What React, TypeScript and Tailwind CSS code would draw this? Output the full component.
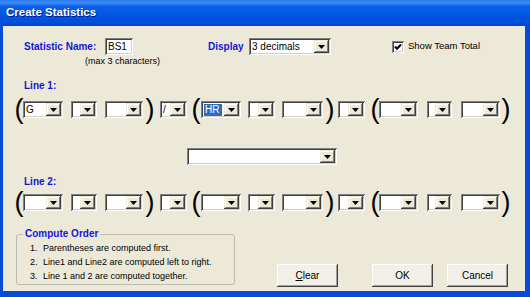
import React from "react";

const font = { fontFamily: '"Liberation Sans", Arial, sans-serif' };

function Arrow() {
  return (
    <svg width="7" height="4" viewBox="0 0 7 4">
      <polygon points="0,0 7,0 3.5,4" fill="#000" />
    </svg>
  );
}

function Combo({
  w,
  cls = "",
  v,
  sel,
}: {
  w: string;
  cls?: string;
  v?: string;
  sel?: boolean;
}) {
  return (
    <div
      className={`${w} ${cls} h-[17px] shrink-0 flex bg-white shadow-[inset_1px_1px_#808080,inset_-1px_-1px_#ffffff,inset_2px_2px_#404040,inset_-2px_-2px_#d4d0c8]`}
    >
      <div className="flex-1 min-w-0 flex items-center pl-[3px] text-[10px] leading-none">
        {v &&
          (sel ? (
            <span className="h-[12px] flex items-center bg-[#316AC5] text-white pl-[1px] pr-[3px]">
              {v}
            </span>
          ) : (
            <span>{v}</span>
          ))}
      </div>
      <div className="w-[15px] h-[13px] my-[2px] mr-[2px] flex items-center justify-center bg-[#ECE9D8] shadow-[inset_-1px_-1px_#404040,inset_1px_1px_#ECE9D8,inset_-2px_-2px_#808080,inset_2px_2px_#ffffff]">
        <Arrow />
      </div>
    </div>
  );
}

function P({ c, ml = "" }: { c: string; ml?: string }) {
  return (
    <div
      className={`${ml} w-[8px] h-[25px] shrink-0 flex items-center justify-center text-[27px] leading-none`}
    >
      {c}
    </div>
  );
}

function EqRow({ first }: { first?: boolean }) {
  return (
    <div className="flex items-center h-[25px] ml-[12px]">
      <P c="(" />
      <Combo w="w-[40px]" v={first ? "G" : undefined} />
      <Combo w="w-[26px]" cls="ml-[8px]" />
      <Combo w="w-[38px]" cls="ml-[8px]" />
      <P c=")" ml="ml-[3px]" />
      <Combo w="w-[27px]" cls="ml-[6px]" v={first ? "/" : undefined} />
      <P c="(" ml="ml-[5px]" />
      <Combo w="w-[40px]" cls="ml-[1px]" v={first ? "HR" : undefined} sel={first} />
      <Combo w="w-[27px]" cls="ml-[7px]" />
      <Combo w="w-[41px]" cls="ml-[7px]" />
      <P c=")" ml="ml-[3px]" />
      <Combo w="w-[27px]" cls="ml-[4px]" />
      <P c="(" ml="ml-[6px]" />
      <Combo w="w-[39px]" />
      <Combo w="w-[25px]" cls="ml-[9px]" />
      <Combo w="w-[39px]" cls="ml-[9px]" />
      <P c=")" ml="ml-[2px]" />
    </div>
  );
}

function Btn({ children, cls = "" }: { children: React.ReactNode; cls?: string }) {
  return (
    <div
      className={`${cls} w-[61px] h-[23px] flex items-center justify-center text-[10px] bg-[#F2F0E6] shadow-[inset_-1px_-1px_#404040,inset_1px_1px_#ffffff,inset_-2px_-2px_#a0a0a0]`}
    >
      {children}
    </div>
  );
}

export default function App() {
  return (
    <div
      className="w-[530px] h-[297px] flex flex-col bg-[#0A4BD6] text-black"
      style={font}
    >
      {/* Title bar */}
      <div className="h-[26px] shrink-0 flex items-center pl-[6px] bg-[linear-gradient(to_bottom,#2A7BF0_0%,#3C8DF8_10%,#0D60E6_25%,#0055E3_60%,#0050DA_85%,#0044C6_100%)]">
        <span className="text-white font-bold text-[11.5px] [text-shadow:1px_1px_#0A1883]">
          Create Statistics
        </span>
      </div>

      {/* Body */}
      <div className="flex-1 ml-[3px] mr-[5px] mb-[6px] bg-[#ECE9D8] flex flex-col">
        {/* Name / display / team total */}
        <div className="mt-[12px] ml-[21px] flex flex-col">
          <div className="flex items-center h-[17px]">
            <div className="w-[81px] text-[10px] font-bold text-[#1515D8]">Statistic Name:</div>
            <div className="w-[28px] h-[17px] flex items-center pl-[3px] text-[10px] bg-white shadow-[inset_1px_1px_#808080,inset_-1px_-1px_#ffffff,inset_2px_2px_#404040,inset_-2px_-2px_#d4d0c8]">
              BS1
            </div>
            <div className="ml-[75px] w-[41px] text-[10px] font-bold text-[#1515D8]">Display</div>
            <Combo w="w-[82px]" v="3 decimals" />
            <div className="ml-[61px] w-[12px] h-[12px] flex items-center justify-center bg-white shadow-[inset_1px_1px_#808080,inset_-1px_-1px_#ffffff,inset_2px_2px_#404040,inset_-2px_-2px_#d4d0c8]">
              <svg width="8" height="8" viewBox="0 0 8 8">
                <path d="M1 3.5 L3 5.8 L7 1.5" stroke="#000" strokeWidth="2" fill="none" />
              </svg>
            </div>
            <div className="ml-[4px] text-[9.5px]">Show Team Total</div>
          </div>
          <div className="ml-[61px] text-[9px] leading-[12px]">(max 3 characters)</div>
        </div>

        {/* Line 1 */}
        <div className="mt-[13px] ml-[21px] text-[10px] leading-[12px] font-bold text-[#1515D8]">
          Line 1:
        </div>
        <div className="mt-[5px]">
          <EqRow first />
        </div>

        {/* Operator */}
        <div className="mt-[26px] ml-[184px]">
          <Combo w="w-[150px]" />
        </div>

        {/* Line 2 */}
        <div className="mt-[11px] ml-[21px] text-[10px] leading-[12px] font-bold text-[#1515D8]">
          Line 2:
        </div>
        <div className="mt-[2px]">
          <EqRow />
        </div>

        {/* Compute order + buttons */}
        <div className="mt-[13px] flex items-end">
          <fieldset className="ml-[13px] w-[219px] mb-[2px] border border-[#BDBCAE] rounded-[3px] pb-[1px]">
            <legend className="ml-[6px] px-[2px] text-[10px] leading-[12px] font-bold text-[#1515D8]">
              Compute Order
            </legend>
            <div className="pl-[13px] pt-[1px] text-[9px] leading-[14px]">
              <div className="flex">
                <span className="w-[13px]">1.</span>Parentheses are computed first.
              </div>
              <div className="flex">
                <span className="w-[13px]">2.</span>Line1 and Line2 are computed left to right.
              </div>
              <div className="flex">
                <span className="w-[13px]">3.</span>Line 1 and 2 are computed together.
              </div>
            </div>
          </fieldset>
          <Btn cls="ml-[42px]">
            <span>
              <span className="underline">C</span>lear
            </span>
          </Btn>
          <Btn cls="ml-[34px]">OK</Btn>
          <Btn cls="ml-[14px]">Cancel</Btn>
        </div>
      </div>
    </div>
  );
}
